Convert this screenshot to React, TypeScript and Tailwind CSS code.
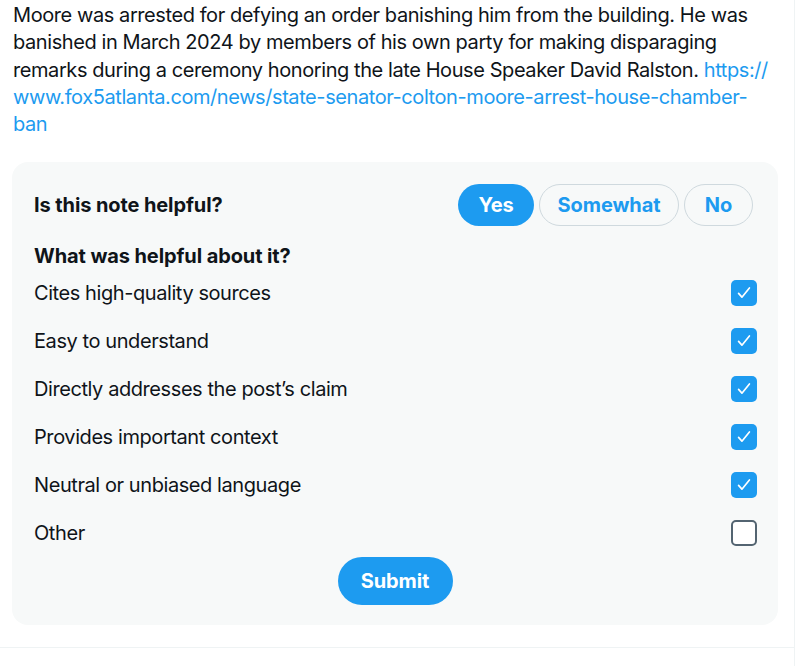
import React from "react";

const items: { label: string; checked: boolean }[] = [
  { label: "Cites high-quality sources", checked: true },
  { label: "Easy to understand", checked: true },
  { label: "Directly addresses the post\u2019s claim", checked: true },
  { label: "Provides important context", checked: true },
  { label: "Neutral or unbiased language", checked: true },
  { label: "Other", checked: false },
];

function Check({ checked }: { checked: boolean }) {
  if (checked) {
    return (
      <div className="w-[26px] h-[26px] rounded-[5px] bg-[#1d9bf0] flex items-center justify-center">
        <svg width="20" height="20" viewBox="0 0 24 24" fill="none">
          <path d="M5.5 12.5l4 4.5L18.5 6" stroke="#ffffff" strokeWidth="2" strokeLinecap="round" strokeLinejoin="round" />
        </svg>
      </div>
    );
  }
  return <div className="w-[26px] h-[26px] rounded-[5px] border-2 border-[#536471] bg-white" />;
}

export default function App() {
  return (
    <div className="w-[802px] h-[666px] bg-white overflow-hidden tracking-[-0.42px]" style={{ fontFamily: "Inter, 'Noto Sans', sans-serif" }}>
      <div className="w-[795px] h-full border-r border-[#eff3f4] flex flex-col">
        <div className="pl-[12px] pr-[16px]">
          <p className="pt-[2px] pl-[1px] text-[20px] leading-[27.3px] text-[#0f1419] whitespace-nowrap">
            Moore was arrested for defying an order banishing him from the building. He was
            <br />
            banished in March 2024 by members of his own party for making disparaging
            <br />
            remarks during a ceremony honoring the late House Speaker David Ralston.{" "}
            <span className="text-[#1d9bf0]">https://</span>
            <br />
            <span className="text-[#1d9bf0]">www.fox5atlanta.com/news/state-senator-colton-moore-arrest-house-chamber-</span>
            <br />
            <span className="text-[#1d9bf0]">ban</span>
          </p>
          <div className="mt-[24px] bg-[#f7f9f9] rounded-[16px] px-[21px] pt-[22px] pb-[20px] text-[#0f1419]">
            <div className="flex items-center justify-between h-[42px]">
              <div className="text-[20px] font-bold pl-[1px] tracking-[-0.1px]">Is this note helpful?</div>
              <div className="flex gap-[5px] pr-[4px] tracking-[-0.1px]">
                <button className="h-[42px] w-[76px] rounded-full bg-[#1d9bf0] text-white font-bold text-[20px]">Yes</button>
                <button className="h-[42px] w-[140px] rounded-full border border-[#cfd9de] text-[#1d9bf0] font-bold text-[20px]">Somewhat</button>
                <button className="h-[42px] w-[69px] rounded-full border border-[#cfd9de] text-[#1d9bf0] font-bold text-[20px]">No</button>
              </div>
            </div>
            <div className="mt-[16px] h-[27px] flex items-center text-[20px] font-bold pl-[1px] tracking-[-0.1px]">What was helpful about it?</div>
            {items.map((it) => (
              <div key={it.label} className="h-[48px] flex items-center justify-between text-[20px] pl-[1px]">
                <span>{it.label}</span>
                <Check checked={it.checked} />
              </div>
            ))}
            <div className="flex justify-center tracking-[-0.1px]">
              <button className="h-[48px] w-[115px] rounded-full bg-[#1d9bf0] text-white font-bold text-[20px]">Submit</button>
            </div>
          </div>
        </div>
        <div className="mt-[22px] border-b border-[#eff3f4]" />
      </div>
    </div>
  );
}
